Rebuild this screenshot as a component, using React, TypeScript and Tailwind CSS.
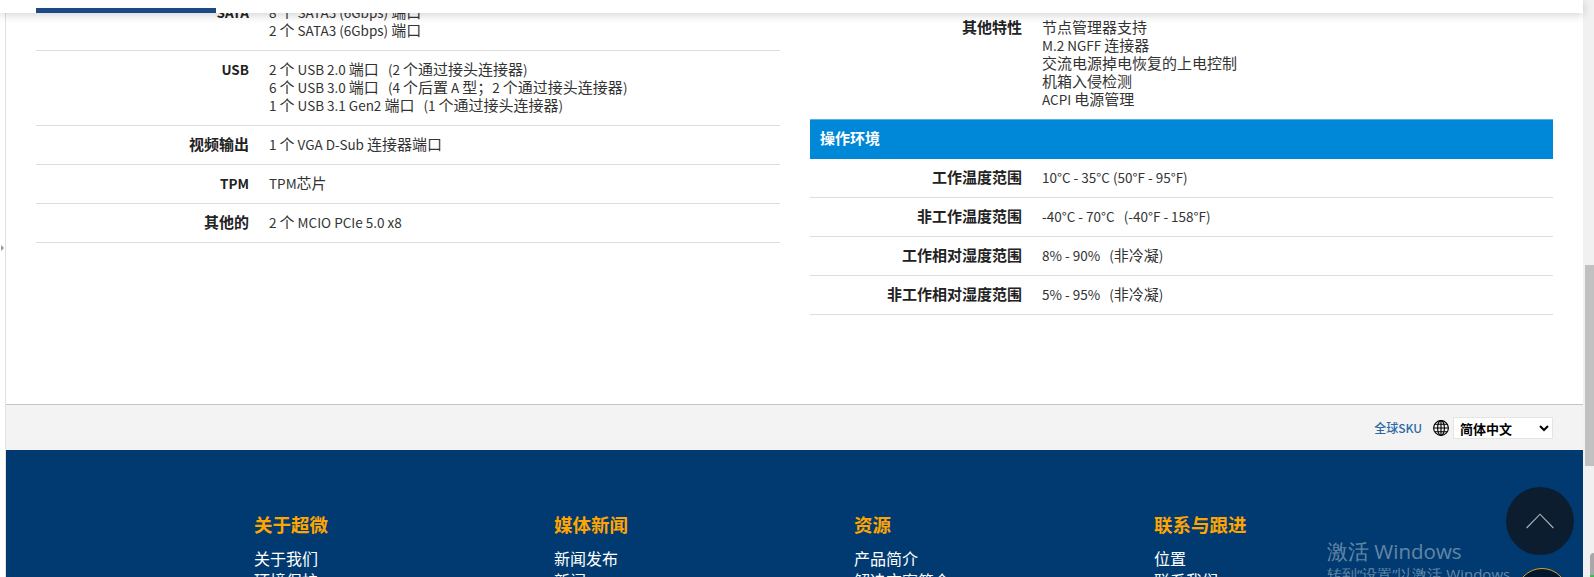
import { Fragment } from "react";

const font = "font-['Noto_Sans_CJK_SC','Noto_Sans',sans-serif]";

type Spec = { label: string; lines: string[] };

const leftSpecs: Spec[] = [
  { label: "SATA", lines: ["8 个 SATA3 (6Gbps) 端口", "2 个 SATA3 (6Gbps) 端口"] },
  {
    label: "USB",
    lines: [
      "2 个 USB 2.0 端口   (2 个通过接头连接器)",
      "6 个 USB 3.0 端口   (4 个后置 A 型；2 个通过接头连接器)",
      "1 个 USB 3.1 Gen2 端口   (1 个通过接头连接器)",
    ],
  },
  { label: "视频输出", lines: ["1 个 VGA D-Sub 连接器端口"] },
  { label: "TPM", lines: ["TPM芯片"] },
  { label: "其他的", lines: ["2 个 MCIO PCIe 5.0 x8"] },
];

const envSpecs: Spec[] = [
  { label: "工作温度范围", lines: ["10°C - 35°C (50°F - 95°F)"] },
  { label: "非工作温度范围", lines: ["-40°C - 70°C   (-40°F - 158°F)"] },
  { label: "工作相对湿度范围", lines: ["8% - 90%   (非冷凝)"] },
  { label: "非工作相对湿度范围", lines: ["5% - 95%   (非冷凝)"] },
];

const footerCols = [
  { title: "关于超微", links: ["关于我们", "环境保护"] },
  { title: "媒体新闻", links: ["新闻发布", "新闻"] },
  { title: "资源", links: ["产品简介", "解决方案简介"] },
  { title: "联系与跟进", links: ["位置", "联系我们"] },
];

// the Chinese runs sit a little larger than the latin ones in this page
function Mixed({ text }: { text: string }) {
  const parts = text.split(/([\u3000-\u9fff\uff00-\uffef]+)/);
  return (
    <>
      {parts.map((p, i) =>
        i % 2 === 1 ? (
          <span key={i} className="text-[15px]">{p}</span>
        ) : (
          <Fragment key={i}>{p}</Fragment>
        )
      )}
    </>
  );
}

function Row({ spec, labelWidth = "w-[213px]", border = true }: { spec: Spec; labelWidth?: string; border?: boolean }) {
  return (
    <div className={border ? "flex gap-5 pt-[9px] pb-[11px] border-b border-[#dddddd]" : "flex gap-5 pt-[9px] pb-[11px]"}>
      <div className={`${labelWidth} shrink-0 h-[18px] text-right font-bold text-[#222222]`}>
        <Mixed text={spec.label} />
      </div>
      <div className="text-[#333333] whitespace-pre">
        {spec.lines.map((l) => (
          <div key={l} className="h-[18px]">
            <Mixed text={l} />
          </div>
        ))}
      </div>
    </div>
  );
}

function Globe() {
  return (
    <svg viewBox="0 0 16 16" className="w-4 h-4" fill="none" stroke="#000000" strokeWidth="1.1">
      <circle cx="8" cy="8" r="7.4" />
      <ellipse cx="8" cy="8" rx="3.4" ry="7.4" />
      <path d="M8 .5v15M.5 8h15M1.6 4.2h12.8M1.6 11.8h12.8" />
    </svg>
  );
}

export default function App() {
  return (
    <div className={`${font} relative flex w-[1594px] h-[577px] overflow-hidden bg-white text-[13.5px] leading-[18px]`}>
      {/* left edge strip */}
      <div className="relative w-[6px] shrink-0 border-r border-[#e2e2e2] bg-white">
        <span className="absolute left-[1px] top-[245px] w-0 h-0 border-y-[3px] border-y-transparent border-l-[3px] border-l-[#999999]" />
      </div>

      <div className="relative flex-1 min-w-0 flex flex-col">
        {/* fixed top header */}
        <div className="absolute top-0 left-[-6px] right-0 h-[13px] bg-white shadow-[0_2px_10px_rgba(0,0,0,0.18)] z-10">
          <div className="absolute left-[36px] top-[8px] w-[180px] h-[5px] bg-[#1b4a85]" />
        </div>

        <div className="h-[404px] shrink-0 overflow-hidden flex gap-[30px] px-[30px]">
          <div className="w-[744px] shrink-0 -mt-[6px]">
            {leftSpecs.map((s) => (
              <Row key={s.label} spec={s} />
            ))}
          </div>
          <div className="w-[743px] shrink-0 mt-[9px]">
            <Row
              border={false}
              labelWidth="w-[212px]"
              spec={{
                label: "其他特性",
                lines: ["节点管理器支持", "M.2 NGFF 连接器", "交流电源掉电恢复的上电控制", "机箱入侵检测", "ACPI 电源管理"],
              }}
            />
            <div className="h-[40px] flex items-center px-[10px] pb-[3px] bg-[#0088d8] border-t border-[#5ab0e4] text-white font-bold text-[15px]">操作环境</div>
            {envSpecs.map((s) => (
              <Row key={s.label} spec={s} labelWidth="w-[212px]" />
            ))}
          </div>
        </div>

        {/* locale bar */}
        <div className="h-[46px] shrink-0 border-t border-[#c4c4c4] bg-[#f3f3f3] flex items-center justify-end pr-[30px]">
          <span className="text-[12px] font-medium text-[#2d6aa5] mr-[11px]">全球SKU</span>
          <Globe />
          <select className="ml-[4px] w-[100px] h-[22px] bg-white border border-[#e4e4e4] text-[13px] font-bold text-black pl-[2px]">
            <option>简体中文</option>
          </select>
        </div>

        {/* footer */}
        <div className="flex-1 bg-[#003a70] pl-[248px] pt-[62px] flex items-start">
          {footerCols.map((c) => (
            <div key={c.title} className="w-[300px] shrink-0">
              <div className="text-[18.5px] leading-[24px] font-bold text-[#ffa500] mb-[11px]">{c.title}</div>
              {c.links.map((l) => (
                <div key={l} className="text-[16px] leading-[22px] text-white">{l}</div>
              ))}
            </div>
          ))}
        </div>
      </div>

      {/* scrollbar */}
      <div className="w-[11px] shrink-0 bg-[#f1f1f1] pt-[265px] pl-[2px]">
        <div className="h-[201px] bg-[#c1c1c1]" />
      </div>
      <div className="absolute left-[1590px] top-[553px] w-[4px] h-[24px] rounded-tl-[4px] bg-[#a8a8a8] flex flex-col justify-end">
        <div className="h-[2px] bg-[#35c04a]" />
      </div>

      {/* windows watermark */}
      <div className="absolute left-[1327px] top-[538px] text-[#ffffff]/40 font-['Open_Sans',sans-serif]">
        <div className="text-[20.5px] leading-[27px]">激活 Windows</div>
        <div className="text-[15px] leading-[19px] whitespace-nowrap">转到“设置”以激活 Windows。</div>
      </div>

      {/* back to top */}
      <div className="absolute left-[1506px] top-[487px] w-[68px] h-[68px] rounded-full bg-[#0c1d30] flex items-center justify-center">
        <svg viewBox="0 0 28 16" className="w-[28px] h-[16px] -mt-[1px]" fill="none" stroke="#aeb4bb" strokeWidth="1.1">
          <path d="M.6 15 14 1.2 27.4 15" />
        </svg>
      </div>
      <div className="absolute left-[1516px] top-[568px] w-[52px] h-[52px] rounded-full bg-[#03172f] border border-[#e0a020]" />
    </div>
  );
}
